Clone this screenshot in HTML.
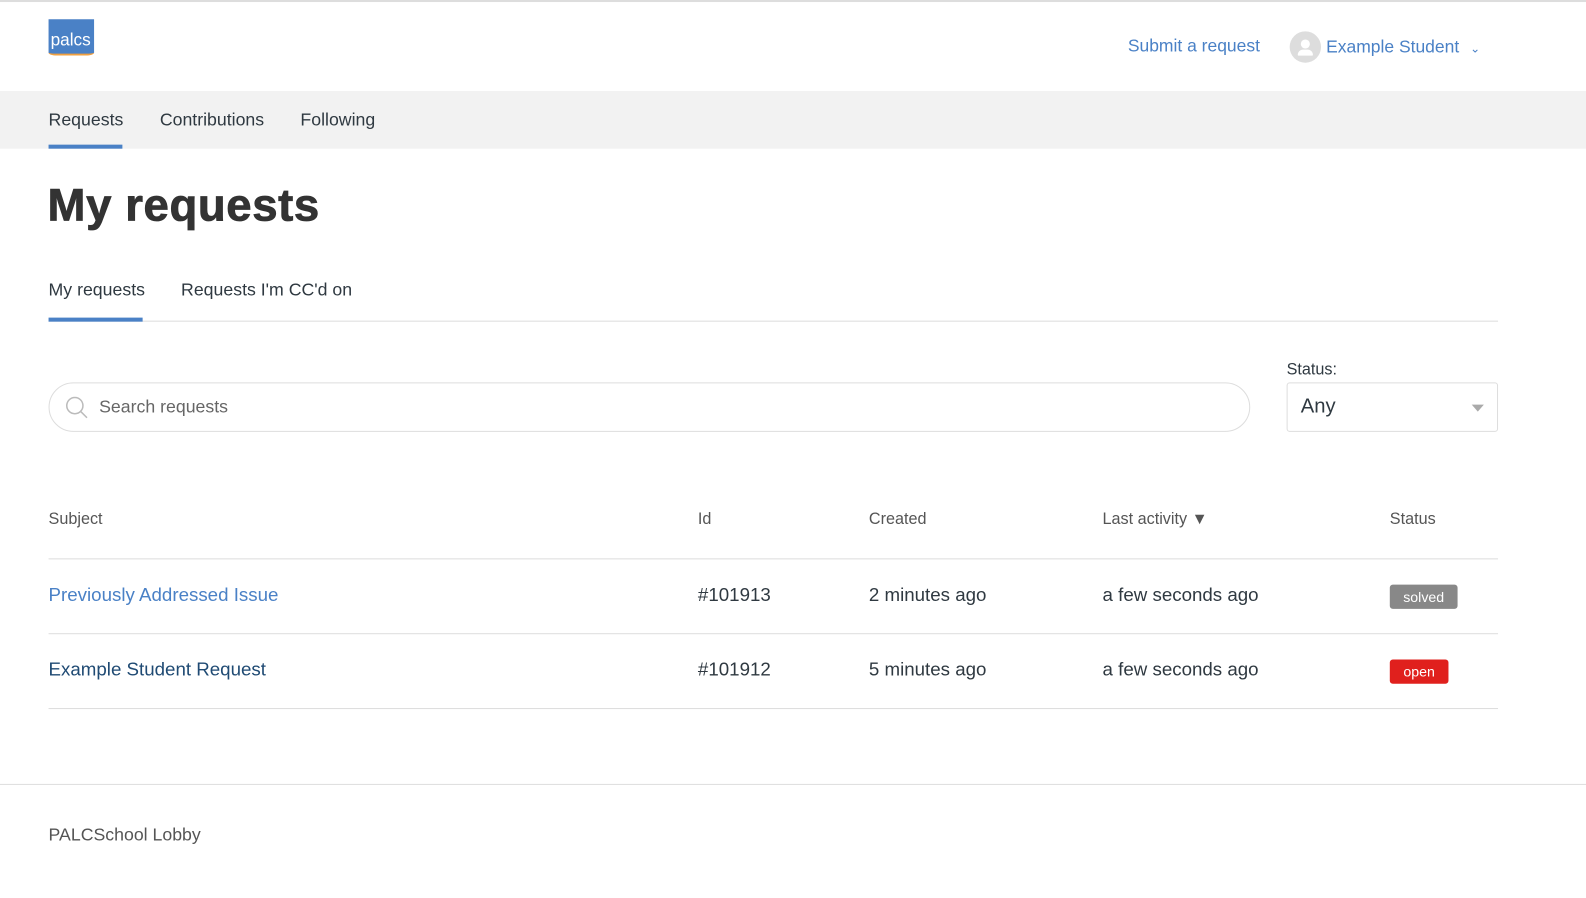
<!DOCTYPE html>
<html><head><style>
*{box-sizing:border-box;margin:0;padding:0}
body{width:1586px;height:898px;font-family:"Liberation Sans",Arial,sans-serif;background:#fff;color:#2f3941;position:relative;overflow:hidden}
#w{position:absolute;left:0;top:0;width:1568px;height:888px;transform:scale(1.0115);transform-origin:0 0;border-top:2px solid #ddd}
.a{position:absolute;white-space:nowrap}
.blue{color:#4a81c6}
</style></head><body><div id="w">
<div class="a" style="left:48px;top:17px;width:45px;height:36px;background:#4a81c6;border-radius:0 0 8px 8px/0 0 3px 3px;border-bottom:2px solid #f0a040"><span style="position:absolute;left:2px;top:11px;color:#fff;font-size:17px">palcs</span></div>
<div class="a blue" style="left:1115px;top:33px;font-size:17.3px">Submit a request</div>
<div class="a" style="left:1275px;top:29px;width:31px;height:31px;border-radius:50%;background:#ddd">
<div style="position:absolute;left:11px;top:8px;width:9px;height:9px;border-radius:50%;background:#fff"></div>
<div style="position:absolute;left:8px;top:18px;width:15px;height:6px;border-radius:7px 7px 1px 1px;background:#fff"></div></div>
<div class="a blue" style="left:1311px;top:34px;font-size:17.3px">Example Student <span style="font-size:12px;margin-left:6px">&#x2304;</span></div>
<div class="a" style="left:0;top:88px;width:1586px;height:57px;background:#f2f2f2"></div>
<div class="a" style="left:48px;top:106px;font-size:17.5px;color:#2f3941">Requests</div>
<div class="a" style="left:48px;top:141px;width:73px;height:4px;background:#4a81c6"></div>
<div class="a" style="left:158px;top:106px;font-size:17.5px">Contributions</div>
<div class="a" style="left:297px;top:106px;font-size:17.5px">Following</div>
<div class="a" style="left:47px;top:175px;font-size:45px;font-weight:bold;color:#333;letter-spacing:0.6px;-webkit-text-stroke:0.8px #333">My requests</div>
<div class="a" style="left:48px;top:274px;font-size:17.5px">My requests</div>
<div class="a" style="left:179px;top:274px;font-size:17.5px">Requests I'm CC'd on</div>
<div class="a" style="left:48px;top:315px;width:1433px;height:1px;background:#ddd"></div>
<div class="a" style="left:48px;top:312px;width:93px;height:4px;background:#4a81c6"></div>
<div class="a" style="left:48px;top:376px;width:1188px;height:49px;border:1px solid #ddd;border-radius:25px"></div>
<svg class="a" style="left:64px;top:389px" width="24" height="24"><circle cx="10" cy="10" r="8" fill="none" stroke="#bbb" stroke-width="1.5"/><line x1="16" y1="16" x2="22" y2="22" stroke="#bbb" stroke-width="1.5"/></svg>
<div class="a" style="left:98px;top:390px;font-size:17.5px;color:#666">Search requests</div>
<div class="a" style="left:1272px;top:355px;font-size:16px">Status:</div>
<div class="a" style="left:1272px;top:376px;width:209px;height:49px;border:1px solid #ddd;border-radius:3px"></div>
<div class="a" style="left:1286px;top:389px;font-size:20px">Any</div>
<div class="a" style="left:1455px;top:398px;border:6px solid transparent;border-top:7px solid #aaa"></div>
<div class="a" style="left:48px;top:503px;font-size:16px;color:#555">Subject</div>
<div class="a" style="left:690px;top:503px;font-size:16px;color:#555">Id</div>
<div class="a" style="left:859px;top:503px;font-size:16px;color:#555">Created</div>
<div class="a" style="left:1090px;top:503px;font-size:16px;color:#555">Last activity ▼</div>
<div class="a" style="left:1374px;top:503px;font-size:16px;color:#555">Status</div>
<div class="a" style="left:48px;top:550px;width:1433px;height:1px;background:#ddd"></div>
<div class="a blue" style="left:48px;top:575px;font-size:18.5px">Previously Addressed Issue</div>
<div class="a" style="left:690px;top:575px;font-size:18.5px">#101913</div>
<div class="a" style="left:859px;top:575px;font-size:18.5px">2 minutes ago</div>
<div class="a" style="left:1090px;top:575px;font-size:18.5px">a few seconds ago</div>
<div class="a" style="left:1374px;top:576px;width:67px;height:24px;background:#888;border-radius:3px;color:#fff;font-size:14px;text-align:center;line-height:24px">solved</div>
<div class="a" style="left:48px;top:624px;width:1433px;height:1px;background:#ddd"></div>
<div class="a" style="left:48px;top:649px;font-size:18.5px;color:#1f4a73">Example Student Request</div>
<div class="a" style="left:690px;top:649px;font-size:18.5px">#101912</div>
<div class="a" style="left:859px;top:649px;font-size:18.5px">5 minutes ago</div>
<div class="a" style="left:1090px;top:649px;font-size:18.5px">a few seconds ago</div>
<div class="a" style="left:1374px;top:650px;width:58px;height:24px;background:#e0201d;border-radius:3px;color:#fff;font-size:14px;text-align:center;line-height:24px">open</div>
<div class="a" style="left:48px;top:698px;width:1433px;height:1px;background:#ddd"></div>
<div class="a" style="left:0;top:773px;width:1586px;height:1px;background:#ddd"></div>
<div class="a" style="left:48px;top:813px;font-size:17.5px;color:#555">PALCSchool Lobby</div>
</div></body></html>
